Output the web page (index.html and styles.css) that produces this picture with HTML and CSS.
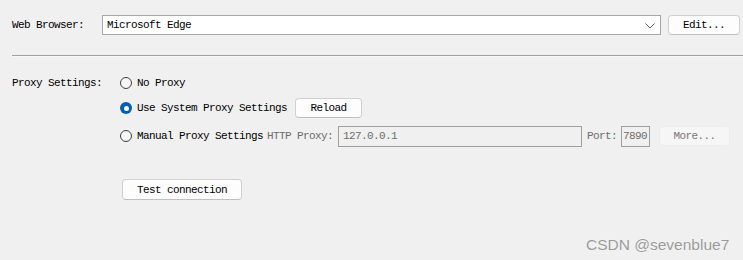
FILE: index.html
```html
<!DOCTYPE html>
<html lang="en">
<head>
  <meta charset="UTF-8">
  <title>Proxy Settings</title>
  <link rel="stylesheet" href="styles.css">
</head>
<body>

  <div class="panel">
    <div class="row browser-row">
      <span class="label">Web Browser:</span>
      <div class="combo">
        <span>Microsoft Edge</span>
        <svg class="chevron" width="10" height="6" viewBox="0 0 10 6">
          <polyline points="0.5,0.5 5,5 9.5,0.5" fill="none" stroke="#606060" stroke-width="1"/>
        </svg>
      </div>
      <button class="btn edit-btn">Edit...</button>
    </div>

    <div class="separator"></div>

    <div class="proxy">
      <span class="label">Proxy Settings:</span>
      <div class="options">
        <div class="row option first">
          <span class="radio"></span>
          <span>No Proxy</span>
        </div>
        <div class="row option second">
          <span class="radio checked"></span>
          <span>Use System Proxy Settings</span>
          <button class="btn reload-btn">Reload</button>
        </div>
        <div class="row option third">
          <span class="radio"></span>
          <span>Manual Proxy Settings</span>
          <span class="dim http-label">HTTP Proxy:</span>
          <div class="field host">127.0.0.1</div>
          <span class="dim port-label">Port:</span>
          <div class="field port">7890</div>
          <button class="btn more-btn" disabled>More...</button>
        </div>
        <button class="btn test-btn">Test connection</button>
      </div>
    </div>
  </div>

  <div class="watermark">CSDN @sevenblue7</div>

</body>
</html>
```

FILE: styles.css
```css
* {
  box-sizing: border-box;
}

body {
  margin: 0;
  width: 743px;
  height: 260px;
  background-color: #f0f0f0;
  font-family: "Liberation Mono", monospace;
  font-size: 11px;
  letter-spacing: -0.6px;
  color: #000;
  position: relative;
  overflow: hidden;
}

.panel {
  padding: 15px 0 0 12px;
}

.row {
  display: flex;
  align-items: center;
  height: 20px;
}

.label {
  width: 90px;
  flex-shrink: 0;
}

.combo {
  width: 559px;
  height: 20px;
  background-color: #fff;
  border: 1px solid #a8a8a8;
  display: flex;
  align-items: center;
  justify-content: space-between;
  padding: 0 5px 0 4px;
}

.chevron {
  margin-top: 1px;
}

.btn {
  height: 20px;
  background-color: #fdfdfd;
  border: 1px solid #d0d0d0;
  border-bottom-color: #c0c0c0;
  border-radius: 4px;
  font-family: inherit;
  font-size: 11px;
  letter-spacing: -0.6px;
  color: #000;
  padding: 0;
}

.edit-btn {
  width: 72px;
  margin-left: 7px;
}

.separator {
  height: 1px;
  margin-top: 20px;
  background-color: #a0a0a0;
  box-shadow: 0 1px 0 #f8f8f8;
}

.proxy {
  display: flex;
  margin-top: 17px;
}

.proxy .label {
  width: 108px;
  line-height: 20px;
}

.options {
  display: flex;
  flex-direction: column;
  align-items: flex-start;
}

.option .radio {
  margin-right: 5px;
}

.second {
  margin-top: 5px;
}

.third {
  margin-top: 8px;
}

.radio {
  width: 12px;
  height: 12px;
  border: 1px solid #404040;
  border-radius: 50%;
  background-color: #f6f6f6;
  flex-shrink: 0;
}

.radio.checked {
  border: none;
  background-color: #005fb8;
  display: flex;
  align-items: center;
  justify-content: center;
}

.radio.checked::after {
  content: "";
  width: 5px;
  height: 5px;
  border-radius: 50%;
  background-color: #fff;
}

.reload-btn {
  width: 67px;
  margin-left: 8px;
}

.dim {
  color: #6d6d6d;
}

.http-label {
  margin-left: 4px;
}

.field {
  height: 21px;
  border: 1px solid #a0a0a0;
  background-color: #f0f0f0;
  color: #6d6d6d;
  line-height: 19px;
}

.host {
  width: 244px;
  margin-left: 5px;
  padding-left: 4px;
}

.port-label {
  margin-left: 5px;
}

.port {
  width: 29px;
  margin-left: 4px;
  padding-left: 1px;
}

.more-btn {
  width: 71px;
  margin-left: 9px;
  color: #777;
  border-color: #ececec;
  background-color: #f6f6f6;
}

.test-btn {
  width: 120px;
  height: 21px;
  margin-top: 33px;
  margin-left: 2px;
}

.watermark {
  position: absolute;
  left: 586px;
  top: 236px;
  font-family: "Liberation Sans", Arial, sans-serif;
  font-size: 15.5px;
  letter-spacing: 0;
  color: #9a9a9a;
  text-shadow: 0 0 1px #fff;
}
```
